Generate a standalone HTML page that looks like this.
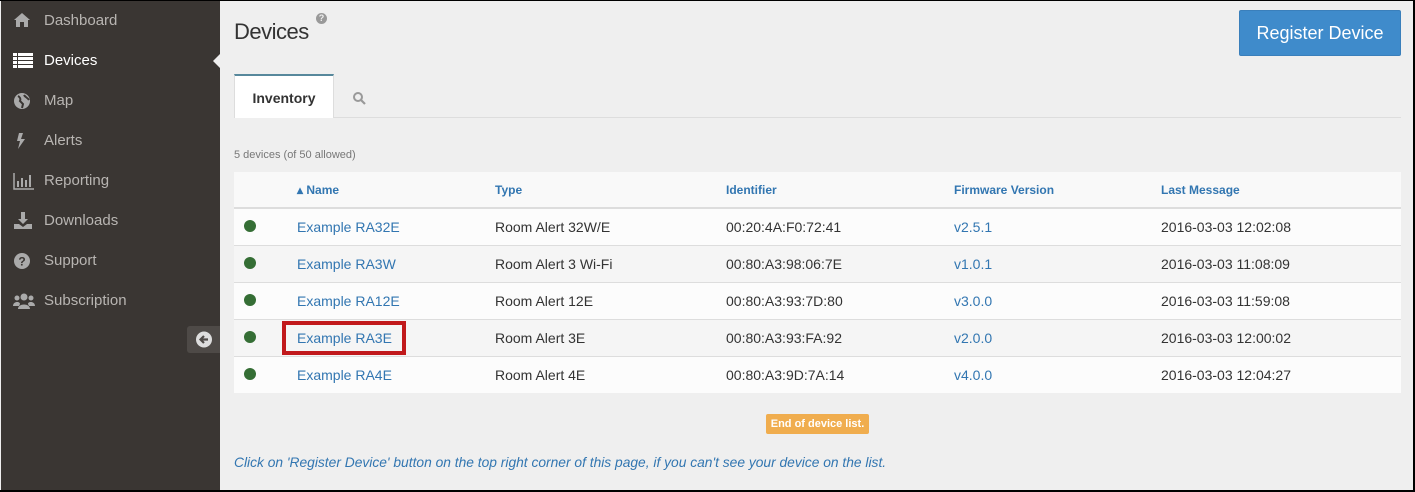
<!DOCTYPE html>
<html><head><meta charset="utf-8"><style>
*{box-sizing:border-box;margin:0;padding:0}
body{width:1415px;height:492px;overflow:hidden;font-family:"Liberation Sans",sans-serif;background:#000;position:relative}
.frame{position:absolute;left:0;top:1px;width:1413px;height:489px;background:#efefef;overflow:hidden}
.side{position:absolute;left:1px;top:0;width:219px;height:100%;background:#3a3633}
.nav{position:absolute;left:0;height:40px;width:219px;color:#b8b5b2;font-size:15px;line-height:40px;padding-left:43px}
.nav.act{color:#fff}
.nav svg{position:absolute;left:12px;top:11px}
.caret{position:absolute;left:213px;top:53px;width:0;height:0;border-top:7px solid transparent;border-bottom:7px solid transparent;border-right:7px solid #efefef}
.coll{position:absolute;left:187px;top:325px;width:33px;height:27px;background:#4e4a47;border-radius:3px 0 0 3px}
h1{position:absolute;left:234px;top:18px;font-weight:normal;font-size:22px;color:#333;letter-spacing:-0.5px}
.q{position:absolute;left:316px;top:12px;width:11px;height:11px;border-radius:50%;background:#999;color:#efefef;font-size:9px;font-weight:bold;text-align:center;line-height:11px}
.btn{position:absolute;left:1239px;top:9px;width:162px;height:46px;background:#3f8bcb;border:1px solid #3a7fbb;border-radius:2px;color:#fff;font-size:18px;text-align:center;line-height:44px}
.tabline{position:absolute;left:234px;top:116px;width:1167px;height:1px;background:#ddd}
.tab{position:absolute;left:234px;top:73px;width:100px;height:44px;background:#fff;border-top:2px solid #57889c;border-left:1px solid #ddd;border-right:1px solid #ddd;font-weight:bold;font-size:14px;color:#333;text-align:center;line-height:44px}
.count{position:absolute;left:234px;top:148px;font-size:11px;color:#777}
table{position:absolute;left:234px;top:171px;width:1167px;border-collapse:collapse;font-size:14px;color:#333}
th{height:36px;text-align:left;color:#3276b1;font-size:12px;background:#f9f9f9;border-bottom:2px solid #ddd;font-weight:bold}
td{height:37px;border-bottom:1px solid #ddd}
tr.o td{background:#fcfcfc}
tr.e td{background:#f5f5f5}
a{color:#3276b1;text-decoration:none}
.dot{display:inline-block;width:12px;height:12px;border-radius:50%;background:#356e35;margin-left:10px}
.hl{position:absolute;left:282px;top:320px;width:124px;height:34px;border:4px solid #c1191c}
.end{position:absolute;left:766px;top:413px;width:103px;height:20px;background:#f0ad4e;color:#fff;font-size:11px;font-weight:bold;text-align:center;line-height:20px;border-radius:2px}
.note{position:absolute;left:234px;top:454px;font-size:13.8px;font-style:italic;color:#3276b1}
</style></head><body><div class="frame">
<div class="side">
<div class="nav" style="top:0"><svg width="18" height="16" viewBox="0 0 18 16"><path d="M9 1L1 8h2v7h4v-5h4v5h4V8h2z" fill="#aaa"/></svg>Dashboard</div>
<div class="nav act" style="top:40px"><svg width="20" height="16" viewBox="0 0 20 16"><rect x="0" y="1" width="20" height="3" fill="#fff"/><rect x="0" y="5" width="20" height="3" fill="#fff"/><rect x="0" y="9" width="20" height="3" fill="#fff"/><rect x="0" y="13" width="20" height="3" fill="#fff"/><rect x="4" y="0" width="1" height="16" fill="#3a3633"/></svg>Devices</div>
<div class="nav" style="top:80px"><svg width="18" height="18" viewBox="0 0 18 18"><circle cx="9" cy="9" r="8" fill="#aaa"/><path d="M5 4c2 1 3 3 2 5l3 3-1 4M11 3c1 2 4 3 5 5" stroke="#3a3633" stroke-width="2" fill="none"/></svg>Map</div>
<div class="nav" style="top:120px"><svg width="18" height="18" viewBox="0 0 18 18"><path d="M6 1h4L8 7h4L5 17l2-8H4z" fill="#aaa"/></svg>Alerts</div>
<div class="nav" style="top:160px"><svg width="22" height="18" viewBox="0 0 22 18"><path d="M1 1v16h20" stroke="#aaa" stroke-width="1.5" fill="none"/><rect x="4" y="9" width="2" height="6" fill="#aaa"/><rect x="8" y="6" width="2" height="9" fill="#aaa"/><rect x="12" y="8" width="2" height="7" fill="#aaa"/><rect x="16" y="3" width="2" height="12" fill="#aaa"/></svg>Reporting</div>
<div class="nav" style="top:200px"><svg width="20" height="18" viewBox="0 0 20 18"><path d="M8 0h4v7h3l-5 5-5-5h3z" fill="#aaa"/><path d="M1 12h5l4 3 4-3h5v5H1z" fill="#aaa"/></svg>Downloads</div>
<div class="nav" style="top:240px"><svg width="18" height="18" viewBox="0 0 18 18"><circle cx="9" cy="9" r="8" fill="#aaa"/><text x="9" y="13.5" font-size="12" font-weight="bold" text-anchor="middle" fill="#3a3633" font-family="Liberation Sans">?</text></svg>Support</div>
<div class="nav" style="top:280px"><svg width="22" height="18" viewBox="0 0 22 18"><circle cx="11" cy="5" r="3.5" fill="#aaa"/><circle cx="4" cy="6" r="2.5" fill="#aaa"/><circle cx="18" cy="6" r="2.5" fill="#aaa"/><path d="M5 17c0-6 12-6 12 0zM0 14c0-5 7-5 7-2l-1 2zM22 14c0-5-7-5-7-2l1 2z" fill="#aaa"/></svg>Subscription</div>
</div>
<div class="coll"><svg width="33" height="27" viewBox="0 0 33 27"><circle cx="17" cy="13.5" r="8" fill="#ddd"/><path d="M21 13.5h-7M17 10l-3.5 3.5 3.5 3.5" stroke="#4e4a47" stroke-width="2.2" fill="none"/></svg></div>
<div class="caret"></div>
<h1>Devices</h1><div class="q">?</div>
<div class="btn">Register Device</div>
<div class="tabline"></div>
<div class="tab">Inventory</div>
<svg style="position:absolute;left:352px;top:90px" width="14" height="14" viewBox="0 0 14 14"><circle cx="6" cy="6" r="4" stroke="#999" stroke-width="2" fill="none"/><path d="M9 9l4 4" stroke="#999" stroke-width="2.2"/></svg>
<div class="count">5 devices (of 50 allowed)</div>
<table>
<tr><th style="width:63px"></th><th style="width:198px">▴ Name</th><th style="width:231px">Type</th><th style="width:228px">Identifier</th><th style="width:207px">Firmware Version</th><th>Last Message</th></tr>
<tr class="o"><td><span class="dot"></span></td><td><a>Example RA32E</a></td><td>Room Alert 32W/E</td><td>00:20:4A:F0:72:41</td><td><a>v2.5.1</a></td><td>2016-03-03 12:02:08</td></tr>
<tr class="e"><td><span class="dot"></span></td><td><a>Example RA3W</a></td><td>Room Alert 3 Wi-Fi</td><td>00:80:A3:98:06:7E</td><td><a>v1.0.1</a></td><td>2016-03-03 11:08:09</td></tr>
<tr class="o"><td><span class="dot"></span></td><td><a>Example RA12E</a></td><td>Room Alert 12E</td><td>00:80:A3:93:7D:80</td><td><a>v3.0.0</a></td><td>2016-03-03 11:59:08</td></tr>
<tr class="e"><td><span class="dot"></span></td><td><a>Example RA3E</a></td><td>Room Alert 3E</td><td>00:80:A3:93:FA:92</td><td><a>v2.0.0</a></td><td>2016-03-03 12:00:02</td></tr>
<tr class="o"><td style="border:0"><span class="dot"></span></td><td style="border:0"><a>Example RA4E</a></td><td style="border:0">Room Alert 4E</td><td style="border:0">00:80:A3:9D:7A:14</td><td style="border:0"><a>v4.0.0</a></td><td style="border:0">2016-03-03 12:04:27</td></tr>
</table>
<div class="hl"></div>
<div class="end">End of device list.</div>
<div class="note">Click on 'Register Device' button on the top right corner of this page, if you can't see your device on the list.</div>
</div></body></html>
